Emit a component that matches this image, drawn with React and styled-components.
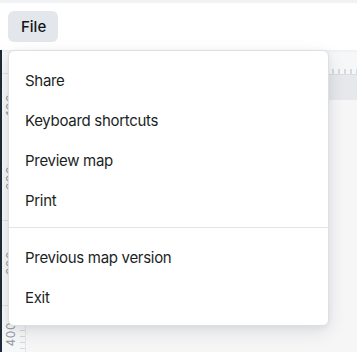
import React from 'react';
import styled, { createGlobalStyle } from 'styled-components';

const GlobalStyle = createGlobalStyle`
  html, body {
    margin: 0;
    padding: 0;
    background: #ffffff;
  }
  body {
    font-family: Inter, "Liberation Sans", sans-serif;
    color: #1f2329;
  }
`;

const Page = styled.div`
  position: relative;
  width: 357px;
  height: 352px;
  overflow: hidden;
  display: flex;
  flex-direction: column;
  background: #ffffff;
`;

const Toolbar = styled.div`
  height: 50px;
  flex-shrink: 0;
  display: flex;
  align-items: flex-start;
  padding: 11px 8px 0;
  box-sizing: border-box;
  background: #ffffff;
  border-top: 3px solid #f1f2f3;
  box-shadow: 0 1px 3px rgba(0, 0, 0, 0.05);
  position: relative;
  z-index: 1;
`;

const MenuButton = styled.button`
  height: 31px;
  margin-top: -3px;
  padding: 0 12px 0 13px;
  border: none;
  border-radius: 6px;
  background: #e3e6ea;
  font-family: Inter, "Liberation Sans", sans-serif;
  font-size: 15px;
  font-weight: 500;
  color: #111418;
  cursor: pointer;
`;

const Workspace = styled.div`
  flex: 1;
  display: flex;
  min-height: 0;
`;

const SideRuler = styled.div`
  width: 23px;
  flex-shrink: 0;
  display: flex;
  flex-direction: column;
  background: #f6f7f8;
  border-left: 2px solid #1f2a37;
  border-right: 1px solid #e3e5e8;
`;

const SideRulerCell = styled.div`
  height: ${(p) => p.$h}px;
  flex-shrink: 0;
  display: flex;
  align-items: ${(p) => (p.$end ? 'flex-end' : 'center')};
  padding-bottom: ${(p) => (p.$end ? 5 : 0)}px;
  border-bottom: 1px solid ${(p) => (p.$line ? '#dfe2e6' : 'transparent')};
  box-sizing: border-box;
`;

const RulerLabel = styled.span`
  writing-mode: vertical-rl;
  transform: rotate(180deg);
  font-size: 12px;
  line-height: 12px;
  color: #9298a0;
  margin-left: 3px;
  letter-spacing: 0.5px;
`;

const RulerTicks = styled.div`
  margin-left: auto;
  width: 5px;
  align-self: stretch;
  margin-bottom: -5px;
  background: repeating-linear-gradient(
    to bottom,
    #d4d7db 0 1px,
    transparent 1px 6px
  );
`;

const Canvas = styled.div`
  flex: 1;
  display: flex;
  flex-direction: column;
  background: #f6f6f7;
`;

const TopRuler = styled.div`
  height: 25px;
  flex-shrink: 0;
  display: flex;
  align-items: flex-end;
  background: #f6f7f8;
  border-bottom: 1px solid #d9dce0;
  box-sizing: border-box;
`;

const TopTicks = styled.div`
  flex: 1;
  height: 5px;
  background: repeating-linear-gradient(
    to right,
    #d6d9dd 0 2px,
    transparent 2px 6px
  );
`;

const Band = styled.div`
  height: 25px;
  flex-shrink: 0;
  background: #e6e8eb;
`;

const Menu = styled.div`
  position: absolute;
  top: 50px;
  left: 8px;
  width: 321px;
  box-sizing: border-box;
  padding: 9px 0 8px;
  background: #ffffff;
  border: 1px solid #dcdfe3;
  border-radius: 6px;
  box-shadow: 0 6px 18px rgba(30, 35, 60, 0.10), 0 2px 6px rgba(30, 35, 60, 0.06);
  z-index: 2;
`;

const MenuItem = styled.div`
  height: 40px;
  display: flex;
  align-items: center;
  padding: 0 16px;
  font-size: 15px;
  letter-spacing: -0.3px;
  color: #1b1f24;
  cursor: pointer;
`;

const Divider = styled.div`
  height: 1px;
  margin: 7px 0 9px;
  background: #e2e4e7;
`;

const rulerRows = [
  { h: 24, line: true },
  { h: 62, line: false, label: '100' },
  { h: 85, line: true, label: '200' },
  { h: 85, line: true, label: '300' },
  { h: 46, line: false, label: '400', end: true },
];

export default function App() {
  return (
    <Page>
      <GlobalStyle />
      <Toolbar>
        <MenuButton>File</MenuButton>
      </Toolbar>
      <Workspace>
        <SideRuler>
          {rulerRows.map((r, i) => (
            <SideRulerCell key={i} $h={r.h} $line={r.line} $end={r.end}>
              {r.label && <RulerLabel>{r.label}</RulerLabel>}
              {r.end && <RulerTicks />}
            </SideRulerCell>
          ))}
        </SideRuler>
        <Canvas>
          <TopRuler>
            <TopTicks />
          </TopRuler>
          <Band />
        </Canvas>
      </Workspace>
      <Menu>
        <MenuItem>Share</MenuItem>
        <MenuItem>Keyboard shortcuts</MenuItem>
        <MenuItem>Preview map</MenuItem>
        <MenuItem>Print</MenuItem>
        <Divider />
        <MenuItem>Previous map version</MenuItem>
        <MenuItem>Exit</MenuItem>
      </Menu>
    </Page>
  );
}
